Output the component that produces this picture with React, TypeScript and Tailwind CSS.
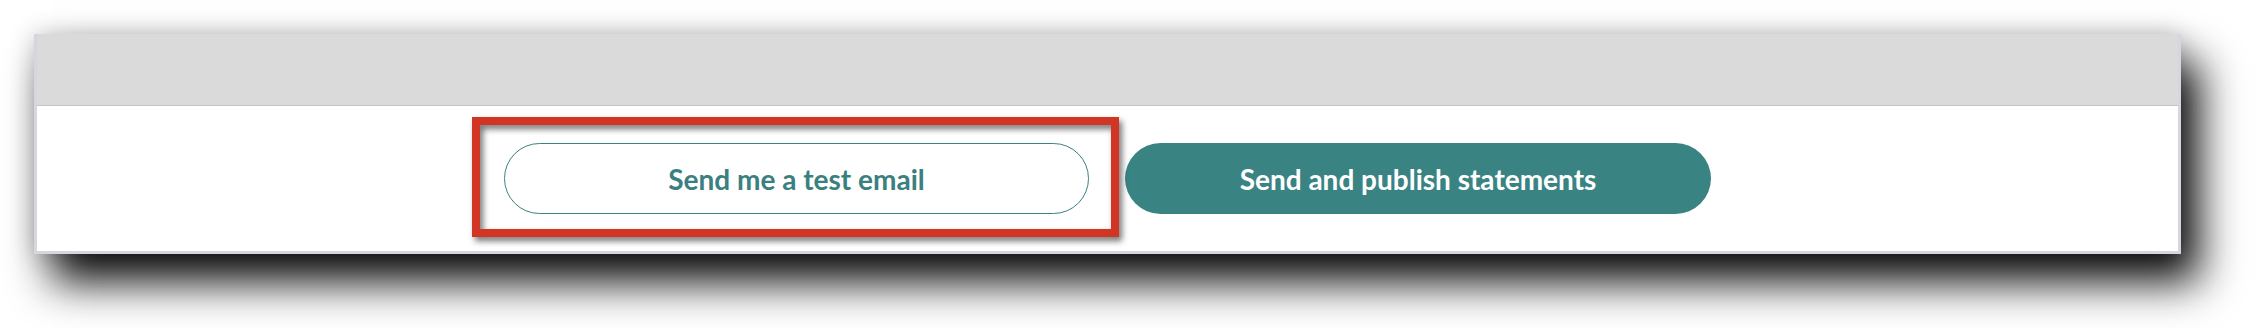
export default function App() {
  return (
    <div className="h-[328px] w-[2256px] overflow-hidden bg-white pl-[34px] pt-[34px]" style={{ fontFamily: "Lato, 'Open Sans', sans-serif" }}>
      <div className="w-[2147px] border-x-[3px] border-b-[3px] border-[#d6d6de] bg-white shadow-[18px_28px_40px_rgba(0,0,0,0.95),0_0_24px_rgba(0,0,0,0.2)]">
        <div className="h-[72px] border-b border-[#c4c4c4] bg-[#dadada]" />
        <div className="flex h-[145px] items-center justify-center gap-[36px]">
          <div className="relative">
            <button className="h-[71px] w-[585px] rounded-full border border-[#3a8383] bg-white text-[28px] font-bold text-[#3a8080]">
              Send me a test email
            </button>
            <div className="pointer-events-none absolute -left-[32px] -right-[30px] -top-[26px] -bottom-[23px] border-[8px] border-[#d13624] drop-shadow-[3px_4px_3px_rgba(0,0,0,0.55)]" />
          </div>
          <button className="h-[71px] w-[586px] rounded-full bg-[#3a8383] text-[28px] font-bold text-white">
            Send and publish statements
          </button>
        </div>
      </div>
    </div>
  );
}
